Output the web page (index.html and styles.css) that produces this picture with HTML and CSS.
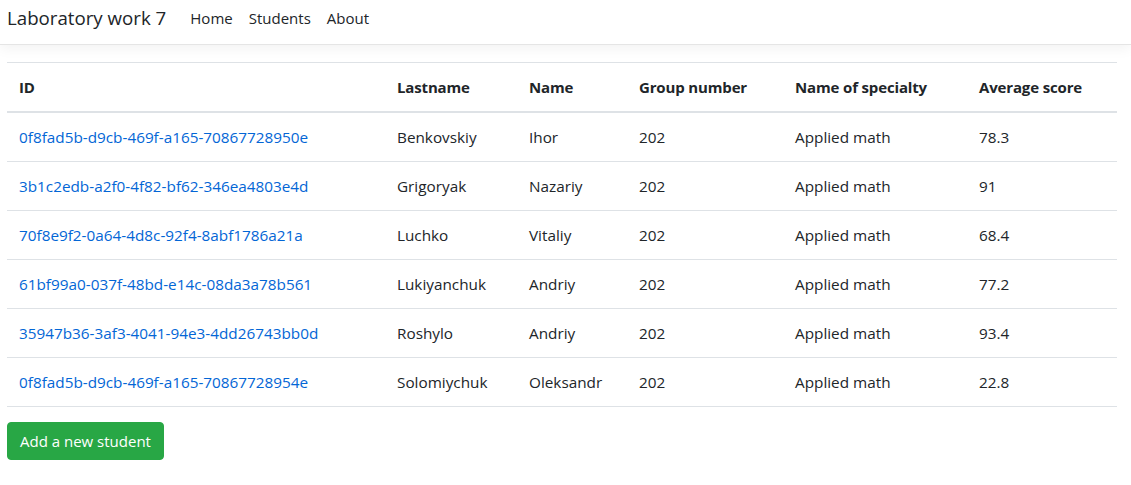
FILE: index.html
```html
<!DOCTYPE html>
<html lang="en">
<head>
<meta charset="utf-8">
<title>Students - Laboratory work 7</title>
<link rel="stylesheet" href="styles.css">
</head>
<body>
<header class="navbar">
  <a class="brand" href="#">Laboratory work 7</a>
  <nav class="nav">
    <a class="nav-link" href="#">Home</a>
    <a class="nav-link" href="#">Students</a>
    <a class="nav-link" href="#">About</a>
  </nav>
</header>
<main class="main">
  <table class="table">
    <colgroup>
      <col class="c-id"><col class="c-last"><col class="c-name"><col class="c-group"><col class="c-spec"><col class="c-avg">
    </colgroup>
    <thead>
      <tr><th>ID</th><th>Lastname</th><th>Name</th><th>Group number</th><th>Name of specialty</th><th>Average score</th></tr>
    </thead>
    <tbody>
      <tr><td><a href="#">0f8fad5b-d9cb-469f-a165-70867728950e</a></td><td>Benkovskiy</td><td>Ihor</td><td>202</td><td>Applied math</td><td>78.3</td></tr>
      <tr><td><a href="#">3b1c2edb-a2f0-4f82-bf62-346ea4803e4d</a></td><td>Grigoryak</td><td>Nazariy</td><td>202</td><td>Applied math</td><td>91</td></tr>
      <tr><td><a href="#">70f8e9f2-0a64-4d8c-92f4-8abf1786a21a</a></td><td>Luchko</td><td>Vitaliy</td><td>202</td><td>Applied math</td><td>68.4</td></tr>
      <tr><td><a href="#">61bf99a0-037f-48bd-e14c-08da3a78b561</a></td><td>Lukiyanchuk</td><td>Andriy</td><td>202</td><td>Applied math</td><td>77.2</td></tr>
      <tr><td><a href="#">35947b36-3af3-4041-94e3-4dd26743bb0d</a></td><td>Roshylo</td><td>Andriy</td><td>202</td><td>Applied math</td><td>93.4</td></tr>
      <tr><td><a href="#">0f8fad5b-d9cb-469f-a165-70867728954e</a></td><td>Solomiychuk</td><td>Oleksandr</td><td>202</td><td>Applied math</td><td>22.8</td></tr>
    </tbody>
  </table>
  <a class="btn-success" href="#">Add a new student</a>
</main>
</body>
</html>
```
FILE: styles.css
```css
html, body {
  margin: 0;
  padding: 0;
  background: #fff;
}
body {
  font-family: "Open Sans", "Noto Sans", "Liberation Sans", sans-serif;
  font-size: 15.3px;
  line-height: 1.5;
  color: #212529;
}
a {
  text-decoration: none;
}
.navbar {
  box-sizing: border-box;
  height: 45px;
  display: flex;
  align-items: center;
  padding: 0 7px 8px 7px;
  border-bottom: 1px solid #e5e5e5;
  box-shadow: 0 4px 12px rgba(0, 0, 0, 0.05);
  margin-bottom: 17px;
}
.brand {
  font-size: 18.7px;
  line-height: 30px;
  color: #212529;
  margin-right: 16px;
}
.nav {
  display: flex;
}
.nav-link {
  padding: 0 8px;
  color: #212529;
  font-size: 15px;
  line-height: 24px;
}
.main {
  padding: 0 14px 0 7px;
}
.table {
  width: 100%;
  border-collapse: collapse;
  table-layout: fixed;
  font-size: 15.3px;
}
.c-id { width: 378px; }
.c-last { width: 132px; }
.c-name { width: 110px; }
.c-group { width: 156px; }
.c-spec { width: 184px; }
.c-avg { width: 150px; }
.table th,
.table td {
  text-align: left;
  padding: 12px;
  line-height: 24px;
  border-top: 1px solid #dee2e6;
  white-space: nowrap;
}
.table td {
  border-bottom: 1px solid #dee2e6;
}
.table th {
  font-weight: 700;
  font-size: 15px;
  letter-spacing: -0.15px;
  border-bottom: 2px solid #dee2e6;
}
.table td a {
  color: #0366d6;
}
.btn-success {
  display: inline-block;
  margin-top: 15px;
  padding: 6px 12px;
  line-height: 24px;
  font-size: 15px;
  color: #fff;
  background: #28a745;
  border: 1px solid #28a745;
  border-radius: 4px;
}
```
